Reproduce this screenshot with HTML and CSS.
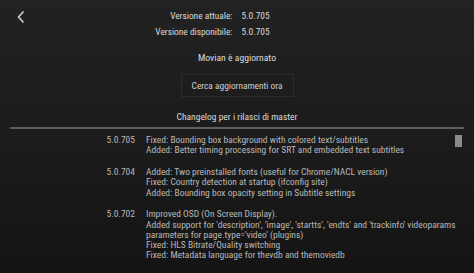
FILE: index.html
```html
<!DOCTYPE html>
<html lang="it">
<head>
<meta charset="utf-8">
<title>Movian</title>
<link rel="stylesheet" href="styles.css">
</head>
<body>
<div class="page">
  <button class="back" aria-label="Indietro">
    <svg width="10" height="14" viewBox="0 0 10 14"><path d="M7.5 1.5 L2.5 7 L7.5 12.5" fill="none" stroke="#cfcfcf" stroke-width="1.6"/></svg>
  </button>
  <div class="info">
    <span class="label">Versione attuale:</span><span class="value">5.0.705</span>
    <span class="label">Versione disponibile:</span><span class="value">5.0.705</span>
  </div>
  <div class="status">Movian è aggiornato</div>
  <div class="btnrow"><button class="check">Cerca aggiornamenti ora</button></div>
  <div class="title">Changelog per i rilasci di master</div>
  <div class="divider"></div>
  <div class="log">
    <div class="entries">
      <div class="entry">
        <div class="ver">5.0.705</div>
        <div class="text">Fixed: Bounding box background with colored text/subtitles<br>Added: Better timing processing for SRT and embedded text subtitles</div>
      </div>
      <div class="entry">
        <div class="ver">5.0.704</div>
        <div class="text">Added: Two preinstalled fonts (useful for Chrome/NACL version)<br>Fixed: Country detection at startup (ifconfig site)<br>Added: Bounding box opacity setting in Subtitle settings</div>
      </div>
      <div class="entry">
        <div class="ver">5.0.702</div>
        <div class="text">Improved OSD (On Screen Display).<br>Added support for 'description', 'image', 'startts', 'endts' and 'trackinfo' videoparams<br>parameters for page.type='video' (plugins)<br>Fixed: HLS Bitrate/Quality switching<br>Fixed: Metadata language for thevdb and themoviedb</div>
      </div>
    </div>
    <div class="scroll"><div class="thumb"></div></div>
  </div>
</div>
</body>
</html>
```
FILE: styles.css
```css
html, body {
  margin: 0;
  height: 100%;
}
body {
  background: linear-gradient(180deg, #222222 0%, #1b1b1b 55%, #141414 100%);
  font-family: "Liberation Sans Narrow", "Roboto Condensed", "Liberation Sans", sans-serif;
  color: #dadada;
  overflow: hidden;
}
.page {
  position: relative;
  padding-top: 8px;
}
.back {
  position: absolute;
  left: 15px;
  top: 9px;
  width: 12px;
  height: 16px;
  padding: 0;
  border: 0;
  background: none;
  display: flex;
  align-items: center;
  justify-content: center;
}
.info {
  display: grid;
  grid-template-columns: 1fr 1fr;
  column-gap: 9px;
  font-size: 9.4px;
  line-height: 16px;
}
.label {
  text-align: right;
}
.value {
  text-align: left;
}
.status {
  margin-top: 10px;
  text-align: center;
  font-size: 9.7px;
  line-height: 16px;
}
.btnrow {
  display: flex;
  justify-content: center;
  margin-top: 8px;
}
.check {
  width: 113px;
  height: 23px;
  padding: 0;
  background: #1d1d1d;
  border: 1px solid #2c2c2c;
  color: #d0d0d0;
  font-family: inherit;
  font-size: 9.4px;
}
.title {
  margin-top: 12px;
  text-align: center;
  font-size: 9.5px;
  line-height: 16px;
}
.divider {
  margin: 2px 10px 0;
  height: 2px;
  background: #5e5e5e;
}
.log {
  position: relative;
  margin: 6px 10px 0;
}
.entries {
  display: flex;
  flex-direction: column;
  gap: 11.4px;
}
.entry {
  display: grid;
  grid-template-columns: 125px 1fr;
  column-gap: 11px;
  font-size: 9.5px;
  line-height: 10.3px;
  color: #b8b8b8;
  white-space: nowrap;
}
.ver {
  text-align: right;
}
.scroll {
  position: absolute;
  right: 2px;
  top: 0;
  width: 7px;
}
.thumb {
  height: 12px;
  background: #8a8a8a;
}
```
